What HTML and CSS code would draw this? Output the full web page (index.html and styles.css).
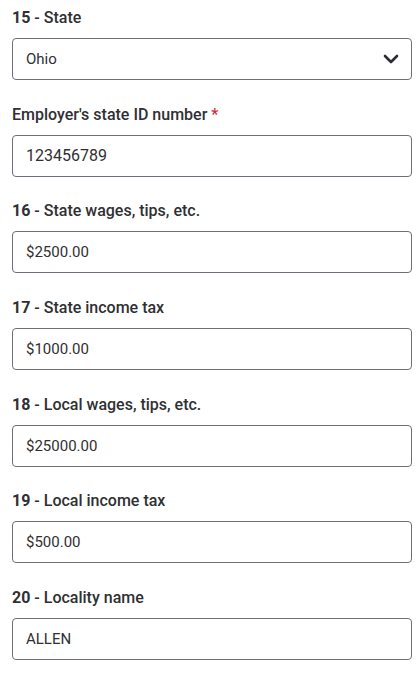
FILE: index.html
```html
<!DOCTYPE html>
<html lang="en">
<head>
<meta charset="UTF-8">
<title>W-2 state and local</title>
<link rel="stylesheet" href="styles.css">
</head>
<body>

<div class="container">

<div class="field">
    <label class="label"><b>15</b> - State</label>
    <div class="select">
        <span>Ohio</span>
        <svg class="chevron" width="16" height="10" viewBox="0 0 16 10"><path d="M2 2 L8 8 L14 2" fill="none" stroke="#2b2d33" stroke-width="2.6" stroke-linecap="round" stroke-linejoin="round"/></svg>
    </div>
</div>

<div class="field">
    <label class="label">Employer's state ID number <span class="req">*</span></label>
    <div class="input big">123456789</div>
</div>

<div class="field">
    <label class="label"><b>16</b> - State wages, tips, etc.</label>
    <div class="input">$2500.00</div>
</div>

<div class="field">
    <label class="label"><b>17</b> - State income tax</label>
    <div class="input">$1000.00</div>
</div>

<div class="field">
    <label class="label"><b>18</b> - Local wages, tips, etc.</label>
    <div class="input">$25000.00</div>
</div>

<div class="field">
    <label class="label"><b>19</b> - Local income tax</label>
    <div class="input">$500.00</div>
</div>

<div class="field">
    <label class="label"><b>20</b> - Locality name</label>
    <div class="input">ALLEN</div>
</div>

</div>

</body>
</html>
```

FILE: styles.css
```css
body {
    font-family: Roboto, "Liberation Sans", sans-serif;
    background: #fff;
    color: #2f3033;
    margin: 0;
}

.container {
    padding: 8px 8px 0 12px;
}

.field {
    margin-bottom: 24.7px;
}

.label {
    display: block;
    font-size: 16px;
    font-weight: 500;
    line-height: 20px;
    margin-bottom: 10px;
}

.label b {
    font-weight: 700;
}

.req {
    color: #d6293a;
}

.input, .select {
    box-sizing: border-box;
    height: 42px;
    width: 400px;
    border: 1px solid #6d707b;
    border-radius: 4px;
    padding: 0 13px;
    font-size: 15px;
    display: flex;
    align-items: center;
}

.input.big {
    font-size: 16px;
}

.select {
    justify-content: space-between;
    padding-right: 12px;
}
```
